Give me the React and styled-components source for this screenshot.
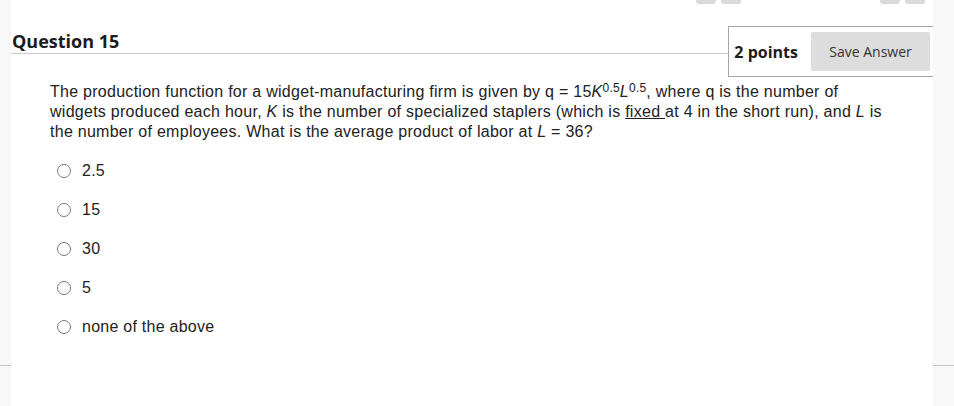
import React from "react";
import styled, { createGlobalStyle } from "styled-components";

const GlobalStyle = createGlobalStyle`
  html, body {
    margin: 0;
    padding: 0;
    background: #f8f8f8;
  }
  body {
    font-family: "Liberation Sans", Arial, sans-serif;
    color: #222;
  }
`;

const options = ["2.5", "15", "30", "5", "none of the above"];

const App = () => {
  return (
    <>
      <GlobalStyle />
      <Page>
        <Gutter />
        <Main>
          <TopStrip>
            <NubGroup>
              <Nub />
              <Nub />
            </NubGroup>
            <NubGroup right>
              <Nub />
              <Nub />
            </NubGroup>
          </TopStrip>

          <Header>
            <Title>Question 15</Title>
            <PointsBox>
              <Points>2 points</Points>
              <SaveButton type="button">Save Answer</SaveButton>
            </PointsBox>
          </Header>

          <Body>
            <Prompt>
              The production function for a widget-manufacturing firm is given
              by q = 15<i>K</i>
              <Sup>0.5</Sup>
              <i>L</i>
              <Sup>0.5</Sup>, where q is the number of widgets produced each
              hour, <i>K</i> is the number of specialized staplers (which is{" "}
              <u>fixed </u>at 4 in the short run), and <i>L</i> is the number
              of employees. What is the average product of labor at <i>L</i> ={" "}
              36?
            </Prompt>

            <Options>
              {options.map((opt, i) => (
                <Option key={i}>
                  <Radio />
                  <OptionLabel>{opt}</OptionLabel>
                </Option>
              ))}
            </Options>
          </Body>
        </Main>
        <Gutter wide />
      </Page>
    </>
  );
};

const Page = styled.div`
  display: flex;
  width: 954px;
  height: 406px;
  overflow: hidden;
`;

const Gutter = styled.div`
  flex: 0 0 ${({ wide }) => (wide ? "21px" : "11px")};
  height: 100%;
  background: linear-gradient(
    to bottom,
    #f8f8f8 0px,
    #f8f8f8 365px,
    #c8c8c8 365px,
    #c8c8c8 366px,
    #f8f8f8 366px
  );
`;

const Main = styled.div`
  flex: 1;
  height: 100%;
  background: #fff;
  display: flex;
  flex-direction: column;
`;

const TopStrip = styled.div`
  display: flex;
  height: 4px;
`;

const NubGroup = styled.div`
  display: flex;
  gap: 5px;
  margin-left: ${({ right }) => (right ? "auto" : "685px")};
  margin-right: ${({ right }) => (right ? "8px" : "0")};
`;

const Nub = styled.div`
  width: 20px;
  height: 4px;
  background: #dadada;
  border-radius: 0 0 3px 3px;
`;

const Header = styled.div`
  display: flex;
  align-items: flex-start;
  padding-top: 22px;
  margin-right: -3px;
`;

const Title = styled.h2`
  flex: 1;
  margin: 0;
  padding: 3px 0 0 1px;
  height: 24px;
  line-height: 24px;
  font-family: "Open Sans", sans-serif;
  font-size: 18px;
  font-weight: 700;
  color: #1c1c1c;
  border-bottom: 1px solid #cccccc;
`;

const PointsBox = styled.div`
  display: flex;
  align-items: center;
  gap: 13px;
  padding: 5px;
  border: 1px solid #a6a6a6;
`;

const Points = styled.span`
  font-family: "Open Sans", sans-serif;
  font-size: 16px;
  font-weight: 700;
  color: #1c1c1c;
`;

const SaveButton = styled.button`
  width: 119px;
  height: 39px;
  border: none;
  border-radius: 2px;
  background: #dddddd;
  font-family: "Open Sans", sans-serif;
  font-size: 14px;
  color: #333;
  padding: 0;
`;

const Body = styled.div`
  padding: 5px 0 0 39px;
`;

const Prompt = styled.p`
  margin: 0;
  width: 848px;
  font-size: 16px;
  line-height: 20px;
  letter-spacing: 0.27px;
  color: #222;
`;

const Sup = styled.span`
  font-size: 12px;
  line-height: 0;
  letter-spacing: 0.2px;
  vertical-align: 5px;
`;

const Options = styled.div`
  display: flex;
  flex-direction: column;
  margin-top: 9px;
`;

const Option = styled.label`
  display: flex;
  align-items: center;
  height: 39px;
  padding-left: 7px;
`;

const Radio = styled.span`
  width: 12px;
  height: 12px;
  border: 1.5px solid #7a7a7a;
  border-radius: 50%;
  flex-shrink: 0;
`;

const OptionLabel = styled.span`
  margin-left: 11px;
  font-size: 16px;
  letter-spacing: 0.25px;
  color: #222;
`;

export default App;
